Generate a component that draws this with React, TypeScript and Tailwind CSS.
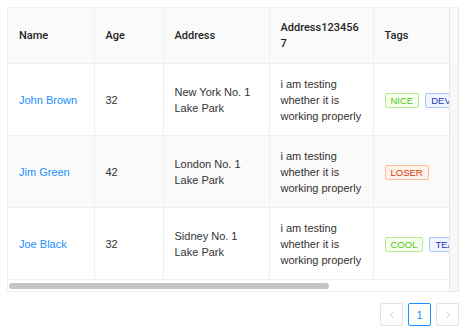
import React from 'react';

type Row = {
  name: string;
  age: number;
  address: string;
  tags: { label: string; tone: 'green' | 'blue' | 'volcano' }[];
  striped?: boolean;
};

const rows: Row[] = [
  { name: 'John Brown', age: 32, address: 'New York No. 1 Lake Park', tags: [{ label: 'NICE', tone: 'green' }, { label: 'DEVELOPER', tone: 'blue' }] },
  { name: 'Jim Green', age: 42, address: 'London No. 1 Lake Park', tags: [{ label: 'LOSER', tone: 'volcano' }], striped: true },
  { name: 'Joe Black', age: 32, address: 'Sidney No. 1 Lake Park', tags: [{ label: 'COOL', tone: 'green' }, { label: 'TEACHER', tone: 'blue' }] },
];

const toneClass = {
  green: 'text-[#52c41a] bg-[#f6ffed] border-[#b7eb8f]',
  blue: 'text-[#1d39c4] bg-[#f0f5ff] border-[#adc6ff]',
  volcano: 'text-[#d4380d] bg-[#fff2e8] border-[#ffbb96]',
};

const th = "border-r border-b border-[#f0f0f0] bg-[#fafafa] px-[11px] pt-[12px] pb-[11px] text-left align-middle font-medium text-[#262626] font-['Roboto','Liberation_Sans',sans-serif] [overflow-wrap:anywhere]";
const td = 'border-r border-b border-[#f0f0f0] px-[11px] pt-[12px] pb-[11px] align-middle text-[#333333]';

export default function App() {
  return (
    <div className="h-[336px] w-[474px] overflow-hidden bg-white p-[7px] text-[11px] leading-[16px] font-['Liberation_Sans','Arial',sans-serif]">
      <div className="flex w-[452px] border-t border-l border-[#f0f0f0]">
        <div className="w-[441px]">
          <div className="overflow-hidden">
            <table className="table-fixed border-collapse w-[505px]">
              <colgroup>
                <col className="w-[86px]" />
                <col className="w-[69px]" />
                <col className="w-[106px]" />
                <col className="w-[104px]" />
                <col className="w-[140px]" />
              </colgroup>
              <thead>
                <tr>
                  <th className={th}>Name</th>
                  <th className={th}>Age</th>
                  <th className={th}>Address</th>
                  <th className={th}>Address1234567</th>
                  <th className={th}>Tags</th>
                </tr>
              </thead>
              <tbody>
                {rows.map((r) => (
                  <tr key={r.name} className={r.striped ? 'bg-[#fafafa]' : 'bg-white'}>
                    <td className={td}>
                      <span className="text-[#1890ff]">{r.name}</span>
                    </td>
                    <td className={td}>{r.age}</td>
                    <td className={td}>{r.address}</td>
                    <td className={td}>i am testing whether it is working properly</td>
                    <td className={td}>
                      <div className="flex gap-[6px] whitespace-nowrap">
                        {r.tags.map((t) => (
                          <span
                            key={t.label}
                            className={`rounded-[2px] border px-[5px] text-[9.5px] leading-[13px] ${toneClass[t.tone]}`}
                          >
                            {t.label}
                          </span>
                        ))}
                      </div>
                    </td>
                  </tr>
                ))}
              </tbody>
            </table>
          </div>
          <div className="flex h-[12px] items-center border-b border-[#ececec] bg-white pl-[1px]">
            <div className="h-[6px] w-[320px] rounded-full bg-[#c4c4c4]" />
          </div>
        </div>
        <div className="flex w-[11px] flex-col border-l border-r border-b border-[#e6e6e6]">
          <div className="h-[56px] bg-[#fafafa]" />
          <div className="flex-1 bg-[#f7f7f7]" />
        </div>
      </div>

      <div className="mt-[11px] flex w-[452px] justify-end gap-[5px]">
        <div className="flex h-[23px] w-[23px] items-center justify-center rounded-[2px] border border-[#e3e3e3] text-[#cfcfcf]">
          <svg width="8" height="8" viewBox="0 0 8 8" fill="none" stroke="currentColor" strokeWidth="1">
            <path d="M5.5 1 L2.5 4 L5.5 7" />
          </svg>
        </div>
        <div className="flex h-[23px] w-[23px] items-center justify-center rounded-[2px] border border-[#1890ff] text-[#1890ff]">
          1
        </div>
        <div className="flex h-[23px] w-[23px] items-center justify-center rounded-[2px] border border-[#e3e3e3] text-[#cfcfcf]">
          <svg width="8" height="8" viewBox="0 0 8 8" fill="none" stroke="currentColor" strokeWidth="1">
            <path d="M2.5 1 L5.5 4 L2.5 7" />
          </svg>
        </div>
      </div>
    </div>
  );
}
